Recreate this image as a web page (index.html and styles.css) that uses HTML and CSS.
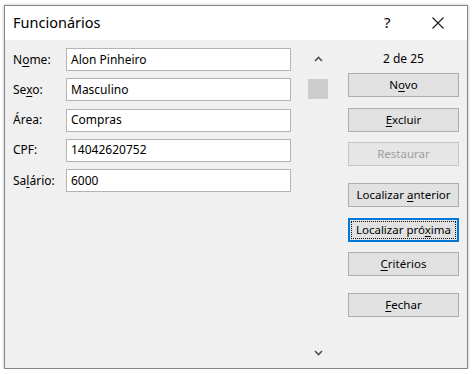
FILE: index.html
```html
<!DOCTYPE html>
<html lang="pt">
<head>
<meta charset="utf-8">
<title>Funcionários</title>
<link rel="stylesheet" href="styles.css">
</head>
<body>
<div class="win">
  <div class="titlebar">
    <span class="title">Funcionários</span>
    <span class="help">?</span>
    <svg class="close" width="12" height="12" viewBox="0 0 12 12"><path d="M0.5 0.5 L11.5 11.5 M11.5 0.5 L0.5 11.5" stroke="#1a1a1a" stroke-width="1.1" fill="none"/></svg>
  </div>
  <div class="body">
    <div class="form">
      <label class="lbl"><span>N<u>o</u>me:</span></label><div class="field"><span>Alon Pinheiro</span></div>
      <label class="lbl"><span>Se<u>x</u>o:</span></label><div class="field"><span>Masculino</span></div>
      <label class="lbl"><span>Área:</span></label><div class="field"><span>Compras</span></div>
      <label class="lbl"><span>CPF:</span></label><div class="field"><span>14042620752</span></div>
      <label class="lbl"><span>Sa<u>l</u>ário:</span></label><div class="field"><span>6000</span></div>
    </div>
    <div class="scroll">
      <div class="arrow"><svg width="9" height="6" viewBox="0 0 9 6"><path d="M1 5 L4.5 1.5 L8 5" stroke="#505050" stroke-width="1.6" fill="none"/></svg></div>
      <div class="thumb"></div>
      <div class="track"></div>
      <div class="arrow"><svg width="9" height="6" viewBox="0 0 9 6"><path d="M1 1 L4.5 4.5 L8 1" stroke="#505050" stroke-width="1.6" fill="none"/></svg></div>
    </div>
    <div class="side">
      <div class="count">2 de 25</div>
      <div class="group">
        <div class="btn"><span>N<u>o</u>vo</span></div>
        <div class="btn"><span><u>E</u>xcluir</span></div>
        <div class="btn disabled"><span>Restaurar</span></div>
      </div>
      <div class="group">
        <div class="btn"><span>Localizar <u>a</u>nterior</span></div>
        <div class="btn focus"><span class="inner"><span>Localizar pró<u>x</u>ima</span></span></div>
        <div class="btn"><span><u>C</u>ritérios</span></div>
      </div>
      <div class="group">
        <div class="btn"><span><u>F</u>echar</span></div>
      </div>
    </div>
  </div>
</div>
</body>
</html>
```

FILE: styles.css
```css
html, body {
  margin: 0;
  padding: 0;
  background: #ffffff;
}
body {
  padding: 5px 0 0 4px;
  font-family: "Noto Sans", "Open Sans", sans-serif;
  font-size: 12px;
  color: #000;
}
.win {
  width: 462px;
  height: 362px;
  border: 1px solid #858585;
  box-shadow: 0 0 3px rgba(0,0,0,0.25);
  background: #f0f0f0;
  display: flex;
  flex-direction: column;
}
.titlebar {
  height: 34px;
  background: #ffffff;
  display: flex;
  align-items: center;
  padding-left: 8px;
  box-sizing: border-box;
}
.title {
  font-size: 14.5px;
  flex: 1;
  padding-bottom: 2px;
}
.help {
  font-size: 15px;
  width: 12px;
  margin-right: 36px;
  padding-bottom: 2px;
}
.close {
  margin-right: 23px;
}
.body {
  flex: 1;
  display: flex;
}
.form {
  width: 298px;
  box-sizing: border-box;
  padding: 8px 0 0 8px;
  display: grid;
  grid-template-columns: 53px 225px;
  grid-auto-rows: 23px;
  row-gap: 7.25px;
  align-content: start;
}
.lbl {
  display: flex;
  align-items: center;
  padding-bottom: 1px;
}
.field {
  background: #fff;
  border: 1px solid #b4b4b4;
  box-sizing: border-box;
  padding-left: 4px;
  display: flex;
  align-items: center;
  padding-bottom: 1px;
}
.scroll {
  width: 30px;
  display: flex;
  flex-direction: column;
  align-items: center;
  padding: 9px 0 5px 0;
  box-sizing: border-box;
}
.arrow {
  height: 20px;
  width: 20px;
  display: flex;
  align-items: center;
  justify-content: center;
}
.thumb {
  width: 20px;
  height: 20px;
  margin-top: 10px;
  background: #cdcdcd;
}
.track {
  flex: 1;
}
.side {
  width: 134px;
  box-sizing: border-box;
  padding: 9px 0 0 15px;
}
.count {
  width: 111px;
  height: 20px;
  line-height: 20px;
  text-align: center;
  margin-bottom: 4px;
}
.group {
  display: flex;
  flex-direction: column;
  gap: 10.5px;
  margin-bottom: 17px;
}
.btn {
  width: 111px;
  height: 24px;
  box-sizing: border-box;
  background: #e1e1e1;
  border: 1px solid #adadad;
  display: flex;
  align-items: center;
  justify-content: center;
  padding-bottom: 1px;
  font-size: 11.5px;
  white-space: nowrap;
}
.btn.disabled {
  color: #a0a0a0;
  border-color: #c6c6c6;
  background: #e6e6e6;
}
.btn.focus {
  border: 2px solid #0078d7;
  background: #e1e1e1;
  padding: 1px;
}
.btn.focus .inner {
  flex: 1;
  align-self: stretch;
  border: 1px dotted #111;
  display: flex;
  align-items: center;
  justify-content: center;
  padding-bottom: 1px;
}
u {
  text-decoration: underline;
  text-underline-offset: 2px;
}
```
